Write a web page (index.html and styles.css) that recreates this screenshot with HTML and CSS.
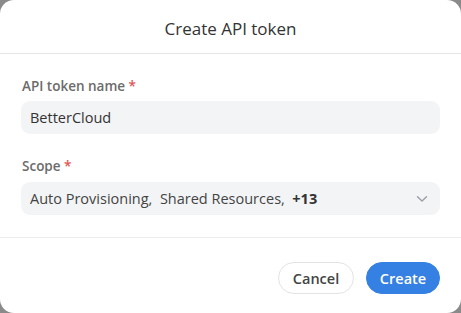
FILE: index.html
```html
<!DOCTYPE html>
<html>
<head>
<meta charset="utf-8">
<link rel="stylesheet" href="styles.css">
</head>
<body>
<div class="modal">
  <div class="header">Create API token</div>
  <div class="body">
    <div class="field">
      <label class="label">API token name <span class="req">*</span></label>
      <div class="input">BetterCloud</div>
    </div>
    <div class="field">
      <label class="label">Scope <span class="req">*</span></label>
      <div class="input select">
        <span class="values">Auto Provisioning,&nbsp; Shared Resources,&nbsp; <b>+13</b></span>
        <svg class="chev" width="12" height="8" viewBox="0 0 12 8"><path d="M1.5 1.8 L6 6 L10.5 1.8" fill="none" stroke="#9a9ea6" stroke-width="1.4" stroke-linecap="round" stroke-linejoin="round"/></svg>
      </div>
    </div>
  </div>
  <div class="footer">
    <button class="btn cancel">Cancel</button>
    <button class="btn create">Create</button>
  </div>
</div>
</body>
</html>
```
FILE: styles.css
```css
* { box-sizing: border-box; }
html, body { margin: 0; padding: 0; }
body {
  width: 461px;
  height: 313px;
  background: #8a8a8a;
  font-family: "Open Sans", "Noto Sans", sans-serif;
  overflow: hidden;
}
.modal {
  width: 461px;
  height: 313px;
  background: #fff;
  border-radius: 14px;
  display: flex;
  flex-direction: column;
}
.header {
  height: 54px;
  border-bottom: 1px solid #e6e6e6;
  display: flex;
  align-items: center;
  justify-content: center;
  font-size: 17px;
  color: #333;
  padding-top: 3px;
}
.body {
  padding: 23px 21px 22px 21px;
  border-bottom: 1px solid #ececec;
  display: flex;
  flex-direction: column;
  gap: 23px;
}
.field { display: flex; flex-direction: column; gap: 6px; }
.field + .field { gap: 7px; }
.label {
  font-size: 13.5px;
  font-weight: 600;
  color: #6b6b6b;
  padding-left: 1px;
  line-height: 18px;
}
.req { color: #e05555; }
.input {
  height: 33px;
  background: #f3f4f6;
  border-radius: 9px;
  display: flex;
  align-items: center;
  padding: 0 9px;
  font-size: 14.5px;
  color: #333;
}
.select { justify-content: space-between; padding-right: 12px; }
.values { color: #444; }
.values b { font-weight: 700; color: #333; }
.chev { display: block; }
.footer {
  flex: 1;
  display: flex;
  justify-content: flex-end;
  align-items: center;
  gap: 12px;
  padding: 5px 21px 0 0;
}
.btn {
  font-family: inherit;
  font-size: 14.5px;
  font-weight: 600;
  height: 32px;
  border-radius: 16px;
  padding: 0 12px;
  cursor: pointer;
}
.cancel {
  background: #fff;
  border: 1px solid #e3e3e3;
  color: #444;
  width: 76px;
}
.create {
  background: #3580e3;
  border: 1px solid #3580e3;
  color: #fff;
  width: 74px;
}
```
